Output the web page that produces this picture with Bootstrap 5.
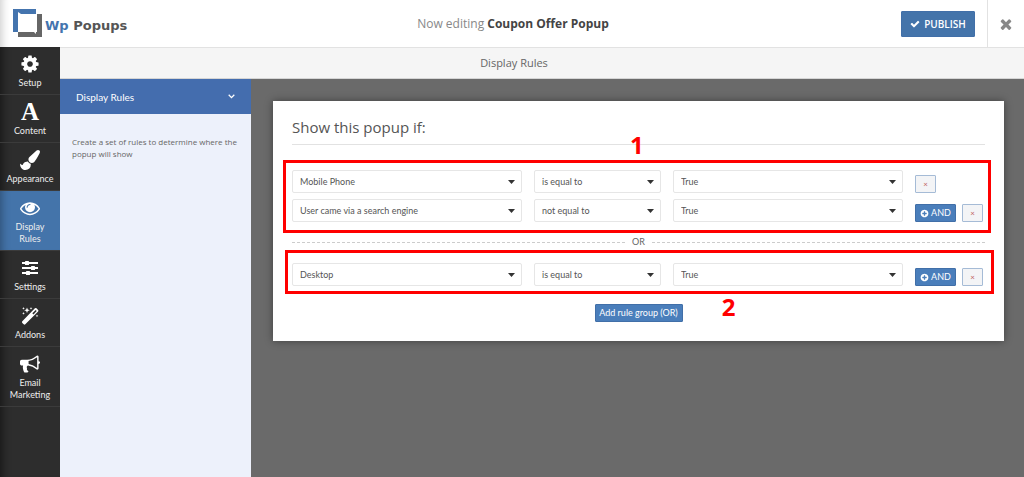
<!DOCTYPE html>
<html lang="en">
<head>
<meta charset="utf-8">
<meta name="viewport" content="width=device-width, initial-scale=1">
<title>WP Popups – Display Rules</title>
<link href="https://cdn.jsdelivr.net/npm/bootstrap@5.3.0/dist/css/bootstrap.min.css" rel="stylesheet">
<style>
  body { font-family: Lato, "Open Sans", sans-serif; font-size: 9px; line-height: 12px; color: #666; background: #6a6a6a; }
  .shade-left { box-shadow: inset 10px 0 8px -8px rgba(0,0,0,.2); }
  .topbar { display: grid; grid-template-columns: 1fr auto 1fr; height: 48px; margin-bottom: -1px; background: #fff; border-bottom: 1px solid #e2e2e2; }
  .brand { font: bold 13px/16px "DejaVu Sans", sans-serif; color: #555; padding-left: 13px; gap: 3px; }
  .brand b { color: #4474ae; }
  .editing, .subbar, .panel p, .rules h1 { font-family: "Open Sans", sans-serif; }
  .editing { font-size: 12px; line-height: 16px; color: #888; padding-left: 2px; }
  .editing strong { color: #444; }
  .btn { --bs-btn-border-radius: 1px; line-height: 12px; }
  .blue { --bs-btn-bg: #4a7ebb; --bs-btn-border-color: #416fa8; --bs-btn-color: #fff; --bs-btn-hover-bg: #3d6ca5; --bs-btn-hover-color: #fff; }
  .btn-publish { --bs-btn-bg: #4474aa; font-family: "Open Sans", sans-serif; font-size: 10px; font-weight: 600; width: 74px; height: 26px; }
  .close-link { width: 37px; border-left: 1px solid #e2e2e2; }
  .rail { width: 60px; background: #2d2d2d; box-shadow: inset 10px 0 8px -8px rgba(0,0,0,.5); }
  .rail a { min-height: 48px; padding: 7px 0 5px; color: #eee; font-size: 9px; line-height: 12px; text-align: center; border-bottom: 1px solid #3b3b3b; text-decoration: none; }
  .rail a.current { background: #4474aa; box-shadow: inset 10px 0 8px -8px rgba(0,0,0,.3); }
  .rail svg, .letter-icon { width: 20px; height: 20px; margin-bottom: 3px; }
  .letter-icon { font: bold 25px/20px "Liberation Serif", serif; color: #fff; }
  .subbar { height: 32px; font-size: 11px; line-height: 16px; background: #f5f5f5; padding-right: 56px; border-bottom: 1px solid #d5d5d5; border-top: 1px solid #e2e2e2; }
  .panel { width: 191px; background: #edf1fb; }
  .panel-head { height: 35px; padding: 0 16px; background: #446dae; color: #fff; font-size: 10px; border: 0; }
  .panel p { padding: 0 8px 0 12px; margin-top: 22px; font-size: 8px; color: #666; }
  .stage { padding: 22px 20px 22px 22px; background: #6a6a6a; }
  .rules { background: #fff; padding: 16px 19px 19px; box-shadow: 0 0 8px rgba(0,0,0,.4); }
  .rules h1 { font-size: 15px; line-height: 20px; color: #555; padding-bottom: 7px; margin-bottom: 25px; border-bottom: 1px solid #e2e2e2; }
  .rule { display: grid; grid-template-columns: 230fr 127fr 230fr 70px; column-gap: 12px; height: 23px; }
  .rule + .rule { margin-top: 6px; }
  .rule .form-select { min-width: 0; height: 23px; padding: 1px 20px 0 7px; font-size: 9px; line-height: 20px; color: #555; border: 1px solid #e6e6e6; border-radius: 2px;
    background: #fff url("data:image/svg+xml,%3Csvg xmlns='http://www.w3.org/2000/svg' viewBox='0 0 7 4'%3E%3Cpath d='M0 0h7L3.5 4z' fill='%23333'/%3E%3C/svg%3E") no-repeat right 6px center / 7px 4px; }
  .rule-actions { gap: 6px; padding-top: 5px; }
  .btn-and { width: 41px; height: 18px; font-size: 9px; gap: 2px; }
  .btn-drop { --bs-btn-bg: #f3f4f6; --bs-btn-border-color: #a5bbd6; --bs-btn-color: #c0605d; width: 21px; height: 18px; font-size: 8px; }
  .or-line { gap: 7px; margin: 14px 0 15px; font-size: 9px; }
  .or-line::before, .or-line::after { content: ""; flex: 1; height: 1px; background: repeating-linear-gradient(90deg, #ccc 0 3px, transparent 3px 5px); }
  .btn-group-add { height: 18px; width: 88px; font-size: 9px; margin-top: 18px; }
  .callout { position: absolute; border: 3px solid #f00; pointer-events: none; }
  .callout-one { inset: -10px -6px -11px -9px; }
  .callout-two { inset: -13px -9px -8px -7px; }
  .callout-num { position: absolute; color: #f00; font: bold 24px/24px "Open Sans", sans-serif; }
  .callout-one .callout-num { left: calc(50% - 7px); bottom: calc(100% + 6px); }
  .callout-two .callout-num { left: calc(62% - 2px); top: calc(100% + 4px); }
</style>
</head>
<body>
<div class="d-flex flex-column min-vh-100">
  <header class="topbar shade-left">
    <div class="brand d-flex align-items-center">
      <svg width="29" height="29" viewBox="0 0 29 29" aria-hidden="true"><path d="M5 23H0V0h23v5H5z" fill="#4474ae"/><path d="M24 5h5v23H5v-5h19z" fill="#666"/><path d="M5 3l3 2h15v1H5zM20 22l3 3V21z" fill="#fff"/></svg>
      <span class="pt-1"><b>Wp</b> Popups</span>
    </div>
    <div class="editing align-self-center">Now editing <strong>Coupon Offer Popup</strong></div>
    <div class="d-flex justify-content-end align-items-center">
      <button type="button" class="btn blue btn-publish d-flex align-items-center justify-content-center gap-1 p-0 me-2">
        <svg width="10" height="10" viewBox="0 0 1792 1792" fill="#fff" aria-hidden="true"><path d="M1671 566q0 40-28 68l-724 724-136 136q-28 28-68 28t-68-28l-136-136-362-362q-28-28-28-68t28-68l136-136q28-28 68-28t68 28l294 295 656-657q28-28 68-28t68 28l136 136q28 28 28 68z"/></svg>PUBLISH</button>
      <a href="#" class="close-link align-self-stretch d-flex align-items-center justify-content-center ms-1" aria-label="Close">
        <svg width="16" height="16" viewBox="0 0 1792 1792" fill="#888" aria-hidden="true"><path d="M1490 1322q0 40-28 68l-136 136q-28 28-68 28t-68-28l-294-294-294 294q-28 28-68 28t-68-28l-136-136q-28-28-28-68t28-68l294-294-294-294q-28-28-28-68t28-68l136-136q28-28 68-28t68 28l294 294 294-294q28-28 68-28t68 28l136 136q28 28 28 68t-28 68l-294 294 294 294q28 28 28 68z"/></svg></a>
    </div>
  </header>

  <div class="d-flex flex-grow-1">
    <nav class="rail d-flex flex-column flex-shrink-0" aria-label="Builder">
      <a href="#" class="d-flex flex-column align-items-center"><svg viewBox="0 0 1792 1792" fill="#fff" aria-hidden="true"><path d="M1152 896q0-106-75-181t-181-75-181 75-75 181 75 181 181 75 181-75 75-181zm512-109v222q0 12-8 23t-20 13l-185 28q-19 54-39 91 35 50 107 138 10 12 10 25t-9 23q-27 37-99 108t-94 71q-12 0-26-9l-138-108q-44 23-91 38-16 136-29 186-7 28-36 28h-222q-14 0-24.5-8.5t-11.5-21.5l-28-184q-49-16-90-37l-141 107q-10 9-25 9-14 0-25-11-126-114-165-168-7-10-7-23 0-12 8-23 15-21 51-66.5t54-70.5q-27-50-41-99l-183-27q-13-2-21-12.5t-8-23.5v-222q0-12 8-23t19-13l186-28q14-46 39-92-40-57-107-138-10-12-10-24 0-10 9-23 26-36 98.5-107.5t94.5-71.5q13 0 26 10l138 107q44-23 91-38 16-136 29-186 7-28 36-28h222q14 0 24.5 8.5t11.5 21.5l28 184q49 16 90 37l142-107q9-9 24-9 13 0 25 10 129 119 165 170 7 8 7 22 0 12-8 23-15 21-51 66.5t-54 70.5q26 50 41 98l183 28q13 2 21 12.5t8 23.5z"/></svg>Setup</a>
      <a href="#" class="d-flex flex-column align-items-center"><span class="letter-icon" aria-hidden="true">A</span>Content</a>
      <a href="#" class="d-flex flex-column align-items-center"><svg viewBox="0 0 1792 1792" fill="#fff" aria-hidden="true"><path d="M1615 0q70 0 122.5 46.5t52.5 116.5q0 63-45 151-332 629-465 752-97 91-218 91-126 0-216.5-92.5t-90.5-219.5q0-128 92-212l638-579q59-54 130-54zm-909 1034q39 76 106.5 130t150.5 76l1 71q4 213-129.5 347t-348.5 134q-123 0-218-46.5t-152.5-127.5-86.5-183-29-220q7 5 41 30t62 44.5 59 36.5 46 17q41 0 55-37 25-66 57.5-112.5t69.5-76 88-47.5 103-25.5 125-10.5z"/></svg>Appearance</a>
      <a href="#" class="current d-flex flex-column align-items-center" aria-current="page"><svg viewBox="0 0 1792 1792" fill="#fff" aria-hidden="true"><path d="M1664 960q-152-236-381-353 61 104 61 225 0 185-131.5 316.5t-316.5 131.5-316.5-131.5-131.5-316.5q0-121 61-225-229 117-381 353 133 205 333.5 326.5t434.5 121.5 434.5-121.5 333.5-326.5zm-720-384q0-20-14-34t-34-14q-125 0-214.5 89.5t-89.5 214.5q0 20 14 34t34 14 34-14 14-34q0-86 61-147t147-61q20 0 34-14t14-34zm848 384q0 34-20 69-140 230-376.5 368.5t-499.5 138.5-499.5-139-376.5-368q-20-35-20-69t20-69q140-229 376.5-368t499.5-139 499.5 139 376.5 368q20 35 20 69z"/></svg>Display<br>Rules</a>
      <a href="#" class="d-flex flex-column align-items-center"><svg viewBox="0 0 20 20" fill="#fff" aria-hidden="true"><path d="M2 4h16v2H2zM2 9h16v2H2zM2 14h16v2H2z"/><rect x="5" y="3" width="4" height="4" rx=".6"/><rect x="11" y="8" width="4" height="4" rx=".6"/><rect x="6" y="13" width="4" height="4" rx=".6"/></svg>Settings</a>
      <a href="#" class="d-flex flex-column align-items-center"><svg viewBox="0 0 20 20" fill="#fff" aria-hidden="true"><path fill-rule="evenodd" d="M2.300 15.300 14.900 2.300q.8-.7 1.600 0l1.600 1.600q.7.800 0 1.600L5.300 18.300q-.8.700-1.600 0l-1.400-1.400q-.7-.8 0-1.600zM12.300 7.200l1.200 1.200 3.200-3.500-1-1z"/><path d="M7 1.500l.8 2 2 .8-2 .8-.8 2-.8-2-2-.8 2-.8zM3.500 1l.4 1 1 .4-1 .4-.4 1-.4-1-1-.4 1-.4zM11 1l.4 1 1 .4-1 .4-.4 1-.4-1-1-.4 1-.4zM3.500 6l.4 1 1 .4-1 .4-.4 1-.4-1-1-.4 1-.4zM17 8.500l.4 1 1 .4-1 .4-.4 1-.4-1-1-.4 1-.4z"/></svg>Addons</a>
      <a href="#" class="d-flex flex-column align-items-center"><svg viewBox="0 0 1792 1792" fill="#fff" aria-hidden="true"><path d="M1664 640q53 0 90.500 37.500t37.500 90.500-37.500 90.500-90.500 37.500v384q0 52-38 90t-90 38q-417-347-812-380-58 19-91 66t-31 100.500 40 92.500q-20 33-23 65.500t6 58 33.500 55 48 50 61.500 50.500q-29 58-111.500 83t-168.500 11.500-132-55.500q-7-23-29.500-87.500t-32-94.500-23-89-15-101 3.500-98.500 22-110.500h-122q-66 0-113-47t-47-113v-192q0-66 47-113t113-47h480q435 0 896-384 52 0 90 38t38 90v384zm-128 604v-954q-394 302-768 343v270q377 42 768 341z"/></svg>Email<br>Marketing</a>
    </nav>

    <div class="d-flex flex-column flex-grow-1">
      <div class="subbar d-flex align-items-center justify-content-center">Display Rules</div>
      <div class="d-flex flex-grow-1">
        <aside class="panel flex-shrink-0">
          <button type="button" class="panel-head w-100 d-flex align-items-center justify-content-between" aria-expanded="true">Display Rules
            <svg width="7" height="5" viewBox="0 0 7 5" fill="none" stroke="#fff" stroke-width="1.300" aria-hidden="true"><path d="M.7.8l2.800 2.800L6.300.8"/></svg></button>
          <p>Create a set of rules to determine where the popup will show</p>
        </aside>
        <main class="stage flex-grow-1">
          <form class="rules">
            <h1 class="fw-normal">Show this popup if:</h1>
            <div class="position-relative">
              <div class="rule">
                <select class="form-select" aria-label="Condition"><option>Mobile Phone</option></select>
                <select class="form-select" aria-label="Operator"><option>is equal to</option></select>
                <select class="form-select" aria-label="Value"><option>True</option></select>
                <div class="rule-actions d-flex"><button type="button" class="btn btn-drop p-0" aria-label="Remove rule">×</button></div>
              </div>
              <div class="rule">
                <select class="form-select" aria-label="Condition"><option>User came via a search engine</option></select>
                <select class="form-select" aria-label="Operator"><option>not equal to</option></select>
                <select class="form-select" aria-label="Value"><option>True</option></select>
                <div class="rule-actions d-flex">
                  <button type="button" class="btn blue btn-and d-flex align-items-center justify-content-center p-0"><svg width="9" height="9" viewBox="0 0 1792 1792" fill="#fff" aria-hidden="true"><path d="M1344 960v-128q0-26-19-45t-45-19h-256v-256q0-26-19-45t-45-19h-128q-26 0-45 19t-19 45v256h-256q-26 0-45 19t-19 45v128q0 26 19 45t45 19h256v256q0 26 19 45t45 19h128q26 0 45-19t19-45v-256h256q26 0 45-19t19-45zm320-64q0 209-103 385.500t-279.500 279.500-385.500 103-385.500-103-279.500-279.500-103-385.500 103-385.500 279.500-279.500 385.500-103 385.500 103 279.500 279.500 103 385.500z"/></svg>AND</button>
                  <button type="button" class="btn btn-drop p-0" aria-label="Remove rule">×</button></div>
              </div>
              <div class="callout callout-one"><span class="callout-num">1</span></div>
            </div>
            <div class="or-line d-flex align-items-center">OR</div>
            <div class="position-relative">
              <div class="rule">
                <select class="form-select" aria-label="Condition"><option>Desktop</option></select>
                <select class="form-select" aria-label="Operator"><option>is equal to</option></select>
                <select class="form-select" aria-label="Value"><option>True</option></select>
                <div class="rule-actions d-flex">
                  <button type="button" class="btn blue btn-and d-flex align-items-center justify-content-center p-0"><svg width="9" height="9" viewBox="0 0 1792 1792" fill="#fff" aria-hidden="true"><path d="M1344 960v-128q0-26-19-45t-45-19h-256v-256q0-26-19-45t-45-19h-128q-26 0-45 19t-19 45v256h-256q-26 0-45 19t-19 45v128q0 26 19 45t45 19h256v256q0 26 19 45t45 19h128q26 0 45-19t19-45v-256h256q26 0 45-19t19-45zm320-64q0 209-103 385.500t-279.500 279.500-385.500 103-385.500-103-279.500-279.500-103-385.500 103-385.500 279.500-279.500 385.500-103 385.500 103 279.500 279.500 103 385.500z"/></svg>AND</button>
                  <button type="button" class="btn btn-drop p-0" aria-label="Remove rule">×</button></div>
              </div>
              <div class="callout callout-two"><span class="callout-num">2</span></div>
            </div>
            <button type="button" class="btn blue btn-group-add d-block mx-auto p-0">Add rule group (OR)</button>
          </form>
        </main>
      </div>
    </div>
  </div>
</div>
<script src="https://cdn.jsdelivr.net/npm/bootstrap@5.3.0/dist/js/bootstrap.bundle.min.js"></script>
</body>
</html>
